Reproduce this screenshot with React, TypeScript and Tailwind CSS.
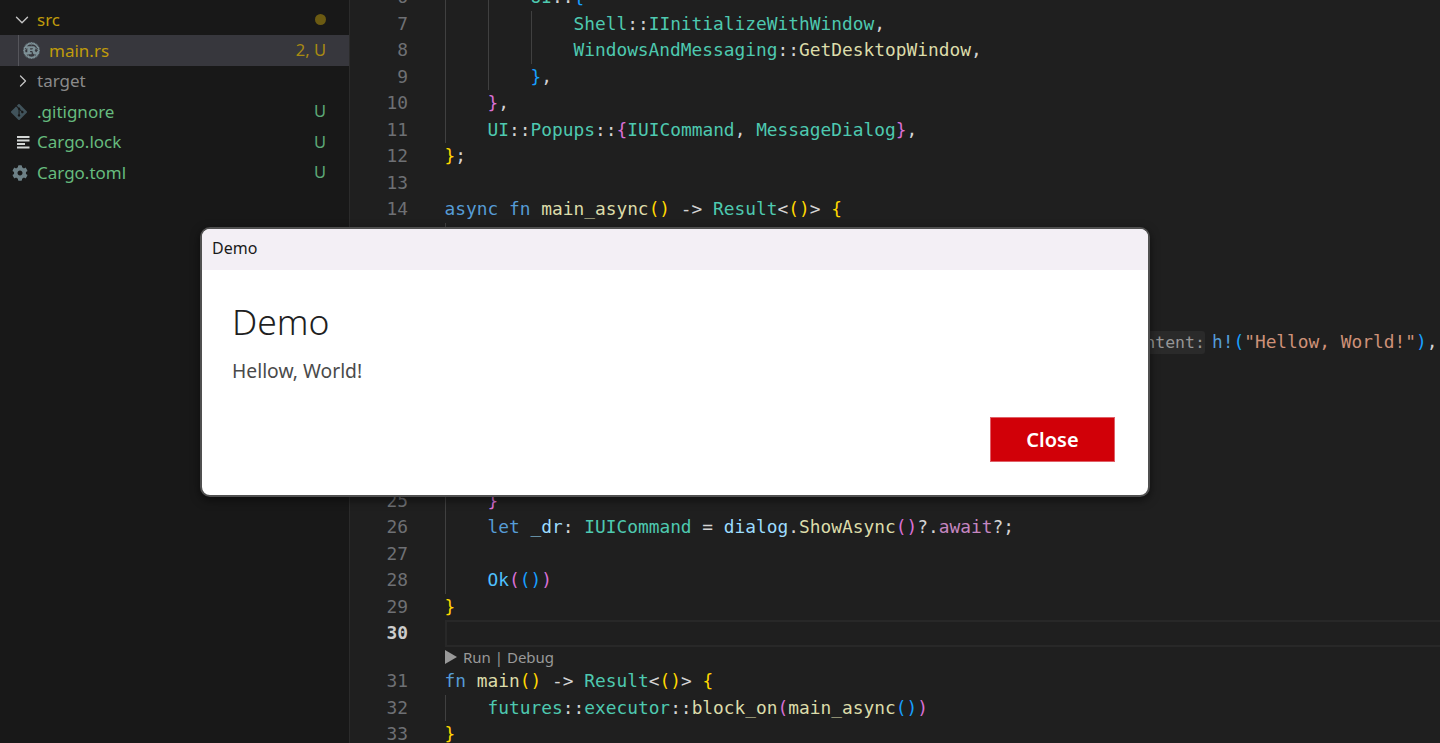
import { ChevronDown, ChevronRight } from 'lucide-react';
import { FaCog } from 'react-icons/fa';
import { SiGit, SiRust } from 'react-icons/si';
import type { ReactNode } from 'react';

const colors = {
  kw: 'text-[#569cd6]',
  ty: 'text-[#4ec9b0]',
  fn: 'text-[#dcdcaa]',
  va: 'text-[#9cdcfe]',
  st: 'text-[#ce9178]',
  ct: 'text-[#c586c0]',
  pu: 'text-[#d4d4d4]',
  yb: 'text-[#ffd700]',
  pb: 'text-[#da70d6]',
  bb: 'text-[#179fff]',
  en: 'text-[#4fc1ff]',
};

type Tok = [string, keyof typeof colors];

interface Line {
  n: number;
  guides?: number[];
  toks?: Tok[];
  extra?: ReactNode;
}

const lines: Line[] = [
  { n: 6, guides: [0, 43], toks: [['        UI', 'ty'], ['::', 'pu'], ['{', 'bb']] },
  { n: 7, guides: [0, 43, 86], toks: [['            Shell', 'ty'], ['::', 'pu'], ['IInitializeWithWindow', 'ty'], [',', 'pu']] },
  { n: 8, guides: [0, 43, 86], toks: [['            WindowsAndMessaging', 'ty'], ['::', 'pu'], ['GetDesktopWindow', 'fn'], [',', 'pu']] },
  { n: 9, guides: [0, 43], toks: [['        ', 'pu'], ['}', 'bb'], [',', 'pu']] },
  { n: 10, guides: [0], toks: [['    ', 'pu'], ['}', 'pb'], [',', 'pu']] },
  { n: 11, guides: [0], toks: [['    UI', 'ty'], ['::', 'pu'], ['Popups', 'ty'], ['::', 'pu'], ['{', 'pb'], ['IUICommand', 'ty'], [', ', 'pu'], ['MessageDialog', 'ty'], ['}', 'pb'], [',', 'pu']] },
  { n: 12, toks: [['}', 'yb'], [';', 'pu']] },
  { n: 13 },
  { n: 14, toks: [['async fn ', 'kw'], ['main_async', 'fn'], ['()', 'yb'], [' -> ', 'pu'], ['Result', 'ty'], ['<', 'pu'], ['()', 'yb'], ['>', 'pu'], [' ', 'pu'], ['{', 'yb']] },
  { n: 15, guides: [0] },
  { n: 16, guides: [0] },
  { n: 17, guides: [0] },
  { n: 18, guides: [0] },
  {
    n: 19,
    guides: [0],
    toks: [['    let ', 'kw'], ['dialog', 'va'], [': ', 'pu'], ['MessageDialog', 'ty'], [' = ', 'pu'], ['MessageDialog', 'ty'], ['::', 'pu'], ['CreateWithTitle', 'fn'], ['(', 'pb']],
    extra: (
      <>
        <span className="ml-[4px] mr-[7px] rounded-[3px] bg-[#2a2a2a] py-[2px] text-[16.5px] text-[#969696]">content:</span>
        <span className="text-[#569cd6]">h!</span>
        <span className="text-[#179fff]">(</span>
        <span className="text-[#ce9178]">"Hellow, World!"</span>
        <span className="text-[#179fff]">)</span>
        <span className="text-[#d4d4d4]">,</span>
      </>
    ),
  },
  { n: 20, guides: [0] },
  { n: 21, guides: [0] },
  { n: 22, guides: [0] },
  { n: 23, guides: [0] },
  { n: 24, guides: [0] },
  { n: 25, guides: [0], toks: [['    ', 'pu'], ['}', 'pb']] },
  { n: 26, guides: [0], toks: [['    let ', 'kw'], ['_dr', 'va'], [': ', 'pu'], ['IUICommand', 'ty'], [' = ', 'pu'], ['dialog', 'va'], ['.', 'pu'], ['ShowAsync', 'fn'], ['()', 'pb'], ['?.', 'pu'], ['await', 'ct'], ['?;', 'pu']] },
  { n: 27, guides: [0] },
  { n: 28, guides: [0], toks: [['    ', 'pu'], ['Ok', 'en'], ['(', 'pb'], ['()', 'bb'], [')', 'pb']] },
  { n: 29, toks: [['}', 'yb']] },
];

const tail: Line[] = [
  { n: 31, toks: [['fn ', 'kw'], ['main', 'fn'], ['()', 'yb'], [' -> ', 'pu'], ['Result', 'ty'], ['<', 'pu'], ['()', 'yb'], ['>', 'pu'], [' ', 'pu'], ['{', 'yb']] },
  { n: 32, guides: [0], toks: [['    futures', 'ty'], ['::', 'pu'], ['executor', 'ty'], ['::', 'pu'], ['block_on', 'fn'], ['(', 'pb'], ['main_async', 'fn'], ['()', 'bb'], [')', 'pb']] },
  { n: 33, toks: [['}', 'yb']] },
];

function CodeLine({ line }: { line: Line }) {
  return (
    <div className="flex h-[26.5px] leading-[26.5px]">
      <div className="w-[58px] shrink-0 text-right text-[#6e7074]">{line.n}</div>
      <div className="relative ml-[37px] flex-1 whitespace-pre">
        {line.guides?.map((g) => (
          <span key={g} className="absolute top-0 bottom-0 w-px bg-[#404040]" style={{ left: g }} />
        ))}
        <span className="-ml-[0.5px]">
          {line.toks?.map((t, i) => (
            <span key={i} className={colors[t[1]]}>{t[0]}</span>
          ))}
          {line.extra}
        </span>
      </div>
    </div>
  );
}

function FileRow({ icon, name, badge, color, selected, badgeColor }: {
  icon: ReactNode;
  name: string;
  badge?: ReactNode;
  color: string;
  selected?: boolean;
  badgeColor?: string;
}) {
  return (
    <div className={`relative flex h-[30.6px] items-center ${selected ? 'bg-[#37373d]' : ''}`}>
      <div className="flex w-[37px] shrink-0 justify-center">{icon}</div>
      <span className={color}>{name}</span>
      <span className={`ml-auto mr-[23px] ${badgeColor ?? ''}`}>{badge}</span>
    </div>
  );
}

export default function App() {
  return (
    <div className="relative flex h-[743px] w-[1440px] overflow-hidden bg-[#1f1f1f] font-['DejaVu_Sans_Mono',monospace] text-[17.85px]">
      {/* explorer */}
      <div className="w-[350px] shrink-0 border-r border-[#2b2b2b] bg-[#181818] pt-[4.5px] font-['Noto_Sans',sans-serif] text-[17px]">
        <FileRow
          icon={<ChevronDown size={22} strokeWidth={1.5} className="ml-[7px] text-[#c5c5c5]" />}
          name="src"
          color="text-[#c09c0b]"
          badge={<span className="block h-[11px] w-[11px] rounded-full bg-[#6b5a12]" />}
        />
        <div className="relative">
          <FileRow
            selected
            icon={<SiRust size={17} className="ml-[25px] shrink-0 text-[#7d9096]" />}
            name="main.rs"
            color="pl-[12px] text-[#c09c0b]"
            badge="2, U"
            badgeColor="text-[#a88a12] text-[16.5px]"
          />
          <span className="absolute top-0 bottom-0 left-[18px] w-px bg-[#55555b]" />
        </div>
        <FileRow
          icon={<ChevronRight size={20} strokeWidth={1.5} className="ml-[8px] text-[#c5c5c5]" />}
          name="target"
          color="text-[#8a8a8a]"
        />
        <FileRow
          icon={<SiGit size={16} className="ml-[1px] text-[#41535b]" />}
          name=".gitignore"
          color="text-[#66bb7e]"
          badge="U"
          badgeColor="text-[#5da877] text-[16.5px]"
        />
        <FileRow
          icon={
            <svg width="13" height="14" viewBox="0 0 13 14" className="ml-[9px]">
              <path d="M0 2h12.5M0 5.500h12.500M0 9h8M0 12.500h12.500" stroke="#d4d7d6" strokeWidth="1.8" />
            </svg>
          }
          name="Cargo.lock"
          color="text-[#66bb7e]"
          badge="U"
          badgeColor="text-[#5da877] text-[16.5px]"
        />
        <FileRow
          icon={<FaCog size={16} className="ml-[2px] text-[#6d8086]" />}
          name="Cargo.toml"
          color="text-[#66bb7e]"
          badge="U"
          badgeColor="text-[#5da877] text-[16.5px]"
        />
      </div>

      {/* editor */}
      <div className="-mt-[16px] flex-1 overflow-hidden">
        {lines.map((l) => (
          <CodeLine key={l.n} line={l} />
        ))}
        <div className="flex h-[26.5px] leading-[26.5px]">
          <div className="w-[58px] shrink-0 text-right font-bold text-[#cccccc]">30</div>
          <div className="ml-[37px] flex-1 border-2 border-r-0 border-[#282828]" />
        </div>
        <div className="ml-[95px] flex h-[21.7px] items-center gap-[5px] font-['Noto_Sans',sans-serif] text-[15px] text-[#999999]">
          <svg width="13" height="14" viewBox="0 0 13 14"><path d="M0 0l12 7-12 7z" fill="#999999" /></svg>
          Run | Debug
        </div>
        {tail.map((l) => (
          <CodeLine key={l.n} line={l} />
        ))}
      </div>

      {/* message dialog */}
      <div className="absolute top-[227px] left-[200px] flex h-[270px] w-[950px] flex-col overflow-hidden rounded-[10px] border-2 border-[#505050] bg-white font-['Noto_Sans',sans-serif] shadow-[0_3px_10px_rgba(0,0,0,0.55)]">
        <div className="flex h-[41px] items-center bg-[#f3eff5] pb-[4px] pl-[10px] text-[16px] text-[#1a1a1a]">Demo</div>
        <div className="flex flex-1 flex-col pt-[26px] pr-[33px] pl-[30px]">
          <div className="text-[35.5px] leading-[50px] font-light text-[#1f1f1f]">Demo</div>
          <div className="mt-[12px] text-[19.3px] leading-[26px] text-[#4a4a4a]">Hellow, World!</div>
          <div className="mt-[33px] flex justify-end">
            <button className="h-[45px] w-[125px] border border-[#e06068] bg-[#d10008] text-[20px] font-semibold text-white">Close</button>
          </div>
        </div>
      </div>
    </div>
  );
}
